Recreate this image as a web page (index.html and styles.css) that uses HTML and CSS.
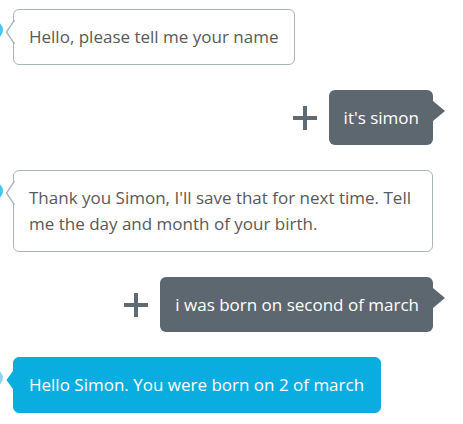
FILE: index.html
```html
<!DOCTYPE html>
<html lang="en">
<head>
<meta charset="utf-8">
<title>Chat</title>
<link rel="stylesheet" href="styles.css">
</head>
<body>
<div class="chat">
  <div class="row bot">
    <span class="avatar"></span>
    <div class="bubble light">
      <svg class="tail-left" viewBox="0 0 10 24" width="10" height="24"><polygon points="10,0 1.5,12 10,24" fill="#ffffff"/><polyline points="9.5,0 1.5,12 9.5,24" fill="none" stroke="#aab6b8" stroke-width="1.4"/></svg>
      Hello, please tell me your name
    </div>
  </div>
  <div class="row user">
    <svg class="plus" viewBox="0 0 24 24" width="24" height="24"><rect x="0" y="10" width="24" height="4" fill="#5f6a72"/><rect x="10" y="0" width="4" height="24" fill="#5f6a72"/></svg>
    <div class="bubble dark">
      it's simon
      <svg class="tail-right" viewBox="0 0 12 20" width="12" height="20"><polygon points="0,0 12,10 0,20" fill="#5d6770"/></svg>
    </div>
  </div>
  <div class="row bot">
    <span class="avatar"></span>
    <div class="bubble light">
      <svg class="tail-left" viewBox="0 0 10 24" width="10" height="24"><polygon points="10,0 1.5,12 10,24" fill="#ffffff"/><polyline points="9.5,0 1.5,12 9.5,24" fill="none" stroke="#aab6b8" stroke-width="1.4"/></svg>
      Thank you Simon, I'll save that for next time. Tell me the day and month of your birth.
    </div>
  </div>
  <div class="row user">
    <svg class="plus" viewBox="0 0 24 24" width="24" height="24"><rect x="0" y="10" width="24" height="4" fill="#5f6a72"/><rect x="10" y="0" width="4" height="24" fill="#5f6a72"/></svg>
    <div class="bubble dark">
      i was born on second of march
      <svg class="tail-right" viewBox="0 0 12 20" width="12" height="20"><polygon points="0,0 12,10 0,20" fill="#5d6770"/></svg>
    </div>
  </div>
  <div class="row bot">
    <span class="avatar pale"></span>
    <div class="bubble cyan">
      <svg class="tail-left" viewBox="0 0 10 24" width="10" height="24"><polygon points="10,0 1.5,12 10,24" fill="#0aade0"/></svg>
      Hello Simon. You were born on 2 of march
    </div>
  </div>
</div>
</body>
</html>
```
FILE: styles.css
```css
html, body {
  margin: 0;
  padding: 0;
  background: #ffffff;
}

body {
  font-family: "Open Sans", "Liberation Sans", sans-serif;
  font-size: 17px;
  color: #595959;
  overflow: hidden;
}

.chat {
  display: flex;
  flex-direction: column;
  gap: 25px;
  padding: 9px 30px 0 0;
}

.row {
  display: flex;
  align-items: center;
}

.row.user {
  justify-content: flex-end;
}

.row.bot {
  align-items: flex-start;
}

.avatar {
  flex: 0 0 18px;
  width: 18px;
  height: 18px;
  border-radius: 50%;
  background: #45c6ee;
  margin: 12px 10px 0 -15px;
}

.avatar.pale {
  background: #8fd8f0;
}

.bubble {
  position: relative;
  box-sizing: border-box;
  border-radius: 6px;
  padding: 14px 16px 14px 15px;
  line-height: 26px;
  border: 1px solid transparent;
}

.bubble.light {
  background: #ffffff;
  border-color: #aab6b8;
}

.bubble.dark {
  background: #5d6770;
  border: 0;
  padding: 14.5px 14px 14.5px 15px;
  color: #ffffff;
}

.bubble.cyan {
  background: #0aade0;
  border-color: #0aade0;
  color: #ffffff;
}

.tail-left {
  position: absolute;
  left: -9px;
  top: 10px;
  display: block;
}

.tail-right {
  position: absolute;
  right: -12px;
  top: 11px;
  display: block;
}

.plus {
  display: block;
  margin-right: 12px;
}
```
